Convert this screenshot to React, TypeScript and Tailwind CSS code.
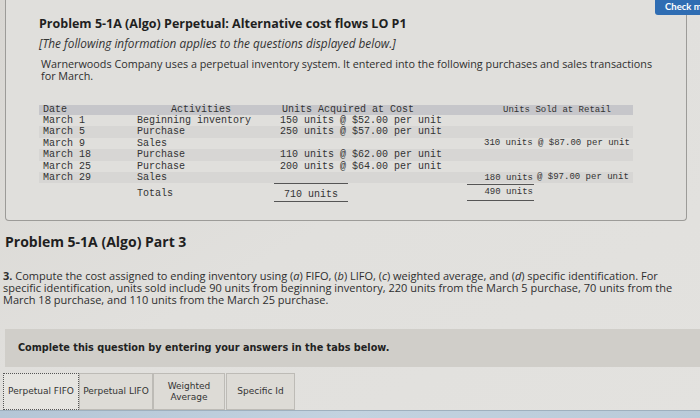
import React from "react";

const mono = { fontFamily: '"Liberation Mono", "DejaVu Sans Mono", monospace' };
const sans = { fontFamily: '"Open Sans", Lato, sans-serif' };
const lato = { fontFamily: 'Lato, "Open Sans", sans-serif' };
const verd = { fontFamily: '"DejaVu Sans", Verdana, sans-serif' };

type Row = { date: string; act: string; acq?: string; sold?: string; shade?: boolean };

const rows: Row[] = [
  { date: "March 1", act: "Beginning inventory", acq: "150 units @ $52.00 per unit" },
  { date: "March 5", act: "Purchase", acq: "250 units @ $57.00 per unit", shade: true },
  { date: "March 9", act: "Sales", sold: "310 units @ $87.00 per unit" },
  { date: "March 18", act: "Purchase", acq: "110 units @ $62.00 per unit", shade: true },
  { date: "March 25", act: "Purchase", acq: "200 units @ $64.00 per unit" },
  { date: "March 29", act: "Sales", shade: true },
];

export default function App() {
  return (
    <div className="relative w-[700px] h-[418px] overflow-hidden bg-linear-to-br from-[#d8d6d2] via-[#e1e0dd] to-[#e3e2df] text-[#2a2a2a]">
      {/* Check button */}
      <div
        className="absolute left-[655px] top-0 h-[15px] w-[80px] bg-[#2f6db3] rounded-bl-[3px] pl-[10px] text-[9.5px] leading-[13px] font-bold text-white whitespace-nowrap"
        style={lato}
      >
        Check my work
      </div>

      {/* Top info box */}
      <div className="ml-[5px] w-[682px] h-[221px] border-x border-b border-[#9c9b98] rounded-b-[4px] bg-[#e0dfdc]">
        <div className="pl-[33px] pt-[15px]">
          <div className="text-[12.5px] leading-[18px] font-bold text-[#1f1f1f]" style={sans}>
            Problem 5-1A (Algo) Perpetual: Alternative cost flows LO P1
          </div>
          <div className="mt-[3px] text-[11.8px] leading-[14px] italic text-[#333]" style={sans}>
            [The following information applies to the questions displayed below.]
          </div>
          <div className="mt-[8px] ml-[2px] w-[618px] text-[10.8px] leading-[12px] text-[#2e2e2e]" style={sans}>
            Warnerwoods Company uses a perpetual inventory system. It entered into the following purchases and sales transactions for March.
          </div>
        </div>

        {/* Table */}
        <div className="ml-[33px] mt-[23px] w-[594px] text-[10px] text-[#333]" style={mono}>
          <div className="grid grid-cols-[98px_137px_193px_166px] h-[10px] leading-[10px] bg-[#c6c6ca]">
            <div className="pl-[4px]">Date</div>
            <div className="pl-[34px]">Activities</div>
            <div className="pl-[8px]">Units Acquired at Cost</div>
            <div className="pl-[36px] text-[9px]">Units Sold at Retail</div>
          </div>
          {rows.map((r) => (
            <div
              key={r.date}
              className={`grid grid-cols-[98px_137px_193px_166px] h-[11.4px] leading-[11px] ${r.shade ? "bg-[#d7d6d4]" : ""}`}
            >
              <div className="pl-[4px]">{r.date}</div>
              <div>{r.act}</div>
              <div className="pl-[6px] whitespace-nowrap">{r.acq ?? ""}</div>
              <div className="whitespace-nowrap text-[9px]">
                {r.sold ? (
                  <span className="pl-[17px]">{r.sold}</span>
                ) : r.date === "March 29" ? (
                  <span className="flex">
                    <span className="w-[67px] border-b border-[#555] text-right pr-[1px] leading-[12px]">180 units</span>
                    <span className="pl-[3px]">@ $97.00 per unit</span>
                  </span>
                ) : null}
              </div>
            </div>
          ))}
          <div className="grid grid-cols-[98px_137px_193px_166px] h-[19px] leading-[15px]">
            <div />
            <div className="pt-[3px]">Totals</div>
            <div>
              <div className="w-[74px] h-[19px] border-t border-b border-[#555] text-center pt-[3px]">710 units</div>
            </div>
            <div>
              <div className="w-[67px] h-[18px] border-b border-[#555] text-right pr-[1px] pt-[2px] text-[9px]">490 units</div>
            </div>
          </div>
        </div>
      </div>

      {/* Part 3 heading */}
      <div className="pl-[5px] mt-[12px] text-[14px] leading-[18px] font-bold text-[#1f1f1f]" style={sans}>
        Problem 5-1A (Algo) Part 3
      </div>

      <div className="pl-[3px] mt-[19px] w-[685px] text-[11px] leading-[12px] text-[#2e2e2e]" style={sans}>
        <b>3.</b> Compute the cost assigned to ending inventory using (<i>a</i>) FIFO, (<i>b</i>) LIFO, (<i>c</i>) weighted average, and (<i>d</i>) specific identification. For specific identification, units sold include 90 units from beginning inventory, 220 units from the March 5 purchase, 70 units from the March 18 purchase, and 110 units from the March 25 purchase.
      </div>

      {/* Instruction band */}
      <div className="ml-[5px] mt-[23px] h-[38px] bg-[#d0cec9] pl-[13px] flex items-center">
        <span className="text-[9.7px] font-bold text-[#222]" style={verd}>
          Complete this question by entering your answers in the tabs below.
        </span>
      </div>

      {/* Tabs */}
      <div className="mt-[6px] flex pl-[3px] h-[37px] text-[9px] leading-[11px] text-[#333]" style={verd}>
        <div className="w-[76px] border border-dotted border-[#555] bg-[#e6e5e1] flex items-center justify-center">
          Perpetual FIFO
        </div>
        <div className="w-[74px] border border-[#bdbbb6] bg-[#dddbd6] flex items-center justify-center">
          Perpetual LIFO
        </div>
        <div className="w-[72px] border border-[#bdbbb6] bg-[#dddbd6] flex items-center justify-center text-center">
          Weighted
          <br />
          Average
        </div>
        <div className="ml-[1px] w-[69px] border border-[#bdbbb6] bg-[#dddbd6] flex items-center justify-center">
          Specific Id
        </div>
      </div>
      <div className="h-[10px] bg-linear-to-r from-[#b4c6d6] via-[#c3d3e0] to-[#b9cbd9] border-t border-[#9fb0be]" />
    </div>
  );
}
